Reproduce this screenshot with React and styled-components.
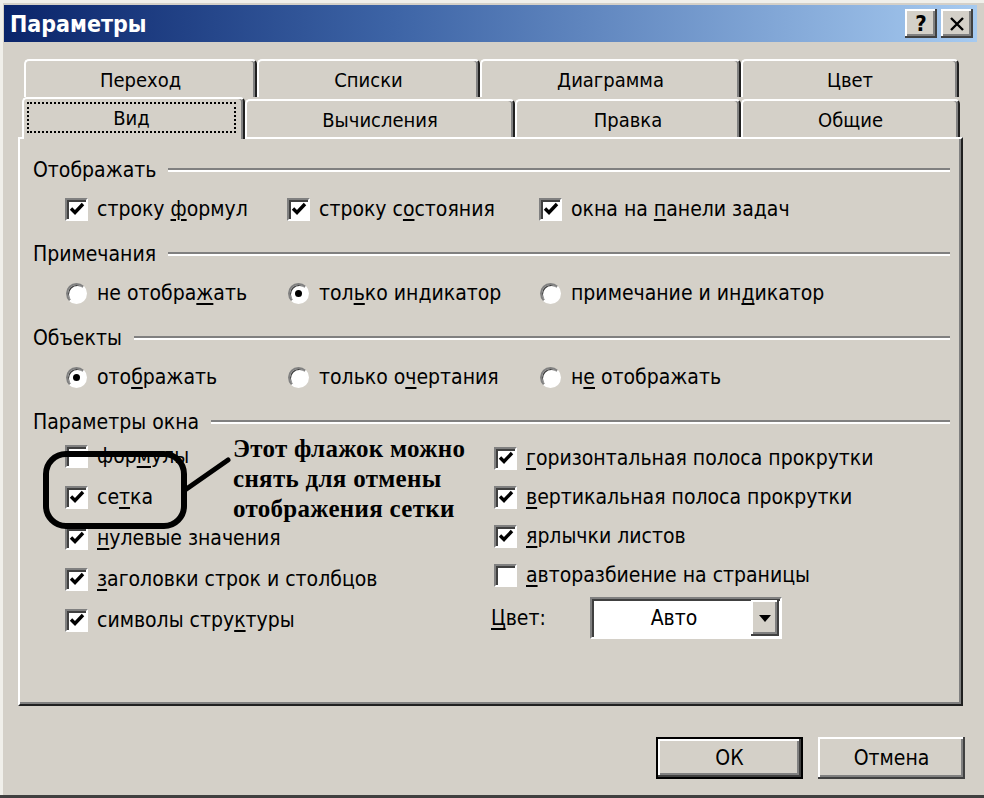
import React from 'react';
import styled, { createGlobalStyle } from 'styled-components';

const GlobalStyle = createGlobalStyle`
  html, body {
    margin: 0;
    padding: 0;
    background: #d4d0c8;
  }
  body {
    font-family: "DejaVu Sans Condensed", "DejaVu Sans", "Liberation Sans", sans-serif;
    font-stretch: condensed;
    color: #000;
  }
`;

/** "&" marks the mnemonic letter (underlined) */
const Mnemonic = ({ text }) => {
  const i = text.indexOf('&');
  if (i < 0) return <Label>{text}</Label>;
  return (
    <Label>
      {text.slice(0, i)}
      <u>{text[i + 1]}</u>
      {text.slice(i + 2)}
    </Label>
  );
};

const Checkbox = ({ checked, label }) => (
  <Option>
    <CheckBox>
      {checked && (
        <svg width="18" height="18" viewBox="0 0 18 18">
          <path d="M3 8.5 L7 12.5 L15 4" fill="none" stroke="#000" strokeWidth="3.4" />
        </svg>
      )}
    </CheckBox>
    <Mnemonic text={label} />
  </Option>
);

const Radio = ({ checked, label }) => (
  <Option>
    <RadioBox>{checked && <RadioDot />}</RadioBox>
    <Mnemonic text={label} />
  </Option>
);

const Group = ({ title, first, children }) => (
  <>
    <GroupHeader $first={first}>
      <span>{title}</span>
      <Rule />
    </GroupHeader>
    {children}
  </>
);

const App = () => {
  return (
    <Window>
      <GlobalStyle />
      <TitleBar>
        <Title>Параметры</Title>
        <TitleButtons>
          <CaptionBtn>?</CaptionBtn>
          <CaptionBtn>
            <svg width="16" height="16" viewBox="0 0 16 16">
              <path d="M2 2 L14 14 M14 2 L2 14" stroke="#000" strokeWidth="2.4" />
            </svg>
          </CaptionBtn>
        </TitleButtons>
      </TitleBar>

      <TabRow $back>
        <Tab $w={233}>Переход</Tab>
        <Tab $w={223}>Списки</Tab>
        <Tab $w={261}>Диаграмма</Tab>
        <Tab $w={218}>Цвет</Tab>
      </TabRow>
      <TabRow>
        <Tab $w={223} $active>
          <FocusBox>Вид</FocusBox>
        </Tab>
        <Tab $w={270}>Вычисления</Tab>
        <Tab $w={226}>Правка</Tab>
        <Tab $w={219}>Общие</Tab>
      </TabRow>

      <Panel>
        <Group title="Отображать" first>
          <OptionRow>
            <Checkbox checked label="строку &формул" />
            <Checkbox checked label="строку с&остояния" />
            <Checkbox checked label="окна на &панели задач" />
          </OptionRow>
        </Group>
        <Group title="Примечания">
          <OptionRow>
            <Radio label="не отобра&жать" />
            <Radio checked label="тол&ько индикатор" />
            <Radio label="примечание и ин&дикатор" />
          </OptionRow>
        </Group>
        <Group title="Объекты">
          <OptionRow>
            <Radio checked label="ото&бражать" />
            <Radio label="только о&чертания" />
            <Radio label="н&е отображать" />
          </OptionRow>
        </Group>
        <Group title="Параметры окна">
          <WindowOptions>
            <OptionColumn>
              <Checkbox label="фор&мулы" />
              <Checkbox checked label="се&тка" />
              <Checkbox checked label="&нулевые значения" />
              <Checkbox checked label="&заголовки строк и столбцов" />
              <Checkbox checked label="символы стру&ктуры" />
            </OptionColumn>
            <OptionColumn $right>
              <Checkbox checked label="&горизонтальная полоса прокрутки" />
              <Checkbox checked label="&вертикальная полоса прокрутки" />
              <Checkbox checked label="&ярлычки листов" />
              <Checkbox label="&авторазбиение на страницы" />
              <ColorRow>
                <ColorLabel>
                  <Mnemonic text="&Цвет:" />
                </ColorLabel>
                <Select>
                  <SelectValue>Авто</SelectValue>
                  <SelectArrow />
                </Select>
              </ColorRow>
            </OptionColumn>
          </WindowOptions>
        </Group>
      </Panel>

      <ButtonBar>
        <DialogButton $default>ОК</DialogButton>
        <DialogButton>Отмена</DialogButton>
      </ButtonBar>

      <Annotation>
        <svg width="984" height="798" viewBox="0 0 984 798">
          <rect x="46" y="454" width="138" height="72" rx="20" ry="20" fill="none" stroke="#000" strokeWidth="6" />
          <path d="M185 490 L228 460" fill="none" stroke="#000" strokeWidth="5" strokeLinecap="round" />
        </svg>
        <Note>
          Этот флажок можно
          <br />
          снять для отмены
          <br />
          отображения сетки
        </Note>
      </Annotation>
    </Window>
  );
};

export default App;

const raised = `
  box-shadow:
    inset -2px -2px #404040,
    inset 2px 2px #ffffff,
    inset -4px -4px #808080;
`;

const sunken = `
  border: 2px solid;
  border-color: #808080 #ffffff #ffffff #808080;
  box-shadow: inset 2px 2px #404040;
`;

const Window = styled.div`
  position: relative;
  box-sizing: border-box;
  width: 984px;
  height: 798px;
  padding: 5px 7px 0 4px;
  background: #d4d0c8;
  border-bottom: 3px solid #404040;
  box-shadow: inset 3px 3px #f0efea;
  overflow: hidden;
  font-size: 21px;
`;

const TitleBar = styled.div`
  display: flex;
  align-items: center;
  justify-content: space-between;
  height: 37px;
  padding: 0 4px 0 6px;
  background: linear-gradient(90deg, #0a246a 0%, #3d64a6 40%, #a6caf0 100%);
`;

const Title = styled.span`
  color: #fff;
  font-family: "DejaVu Sans", sans-serif;
  font-stretch: condensed;
  font-weight: 700;
  font-size: 23px;
`;

const TitleButtons = styled.div`
  display: flex;
  gap: 4px;
`;

const CaptionBtn = styled.div`
  display: flex;
  align-items: center;
  justify-content: center;
  width: 32px;
  height: 29px;
  background: #d4d0c8;
  font-family: "DejaVu Sans", sans-serif;
  font-weight: 700;
  font-size: 22px;
  ${raised};
`;

const TabRow = styled.div`
  display: flex;
  align-items: flex-end;
  padding-left: ${props => (props.$back ? 20 : 18)}px;
  margin-top: ${props => (props.$back ? 19 : 0)}px;
  height: ${props => (props.$back ? 36 : 40)}px;
  position: relative;
  z-index: ${props => (props.$back ? 0 : 1)};
  font-size: 20px;
`;

const Tab = styled.div`
  position: relative;
  z-index: ${props => (props.$active ? 2 : 1)};
  box-sizing: border-box;
  display: flex;
  align-items: center;
  justify-content: center;
  flex: none;
  width: ${props => props.$w}px;
  height: ${props => (props.$active ? 42 : 38)}px;
  margin-bottom: ${props => (props.$active ? -2 : 0)}px;
  padding-top: ${props => (props.$active ? 0 : 2)}px;
  background: #d4d0c8;
  border-top: 2px solid #fff;
  border-left: 2px solid #fff;
  border-right: 2px solid #202020;
  border-radius: 5px 5px 0 0;
  box-shadow: inset -2px 0 #808080;
`;

const FocusBox = styled.div`
  align-self: stretch;
  flex: 1;
  display: flex;
  align-items: center;
  justify-content: center;
  margin: 3px 7px 6px 3px;
  border: 2px dotted #000;
`;

const Panel = styled.div`
  position: relative;
  box-sizing: border-box;
  width: 945px;
  height: 569px;
  margin-left: 14px;
  padding: 19px 11px 0 13px;
  background: #d4d0c8;
  border-top: 2px solid #fff;
  border-left: 2px solid #fff;
  border-right: 2px solid #202020;
  border-bottom: 2px solid #202020;
  box-shadow: inset -2px -2px #808080;
`;

const GroupHeader = styled.div`
  display: flex;
  align-items: center;
  gap: 12px;
  height: 24px;
  margin-top: ${props => (props.$first ? 0 : 21)}px;
`;

const Rule = styled.div`
  flex: 1;
  border-top: 2px solid #808080;
  border-bottom: 2px solid #fff;
`;

const OptionRow = styled.div`
  display: grid;
  grid-template-columns: 222px 252px 1fr;
  margin-top: 15px;
  padding-left: 32px;
`;

const Option = styled.div`
  display: flex;
  align-items: center;
  gap: 9px;
  height: 24px;
  white-space: nowrap;
`;

const Label = styled.span`
  & u {
    text-decoration-thickness: 2px;
    text-underline-offset: 3px;
  }
`;

const CheckBox = styled.span`
  box-sizing: border-box;
  display: flex;
  align-items: center;
  justify-content: center;
  width: 23px;
  height: 23px;
  flex: none;
  background: #fff;
  ${sunken};
`;

const RadioBox = styled.span`
  box-sizing: border-box;
  display: flex;
  align-items: center;
  justify-content: center;
  width: 21px;
  height: 21px;
  margin: 0 1px;
  flex: none;
  border-radius: 50%;
  background: #fff;
  border: 2px solid;
  border-color: #808080 #ffffff #ffffff #808080;
  box-shadow: inset 1px 1px #404040;
`;

const RadioDot = styled.span`
  width: 7px;
  height: 7px;
  border-radius: 50%;
  background: #000;
`;

const WindowOptions = styled.div`
  display: grid;
  grid-template-columns: 429px 1fr;
  margin-top: 10px;
  padding-left: 32px;
`;

const OptionColumn = styled.div`
  display: flex;
  flex-direction: column;
  gap: ${props => (props.$right ? 15 : 17)}px;
  padding-top: ${props => (props.$right ? 2 : 0)}px;
`;

const ColorRow = styled.div`
  display: flex;
  align-items: center;
  margin-top: -5px;
  margin-left: -3px;
`;

const ColorLabel = styled.span`
  width: 99px;
`;

const Select = styled.div`
  box-sizing: border-box;
  display: flex;
  width: 192px;
  height: 42px;
  padding: 1px;
  background: #fff;
  ${sunken};
`;

const SelectValue = styled.div`
  flex: 1;
  display: flex;
  align-items: center;
  justify-content: center;
  padding-left: 4px;
`;

const SelectArrow = styled.div`
  display: flex;
  align-items: center;
  justify-content: center;
  width: 28px;
  background: #d4d0c8;
  ${raised};

  &::after {
    content: '';
    border-left: 6px solid transparent;
    border-right: 6px solid transparent;
    border-top: 7px solid #000;
  }
`;

const ButtonBar = styled.div`
  display: flex;
  justify-content: flex-end;
  gap: 15px;
  margin-top: 31px;
  padding-right: 12px;
`;

const DialogButton = styled.div`
  box-sizing: border-box;
  display: flex;
  align-items: center;
  justify-content: center;
  width: 147px;
  height: 42px;
  background: #d4d0c8;
  ${raised};
  border: ${props => (props.$default ? '2px solid #000' : 'none')};
`;

const Annotation = styled.div`
  position: absolute;
  inset: 0;
  pointer-events: none;

  & > svg {
    position: absolute;
    left: 0;
    top: 0;
  }
`;

const Note = styled.div`
  position: absolute;
  left: 233px;
  top: 434px;
  font-family: "Liberation Serif", "DejaVu Serif", serif;
  font-stretch: normal;
  font-weight: 700;
  font-size: 25px;
  line-height: 30px;
  letter-spacing: 0.3px;
  color: #000;
`;
